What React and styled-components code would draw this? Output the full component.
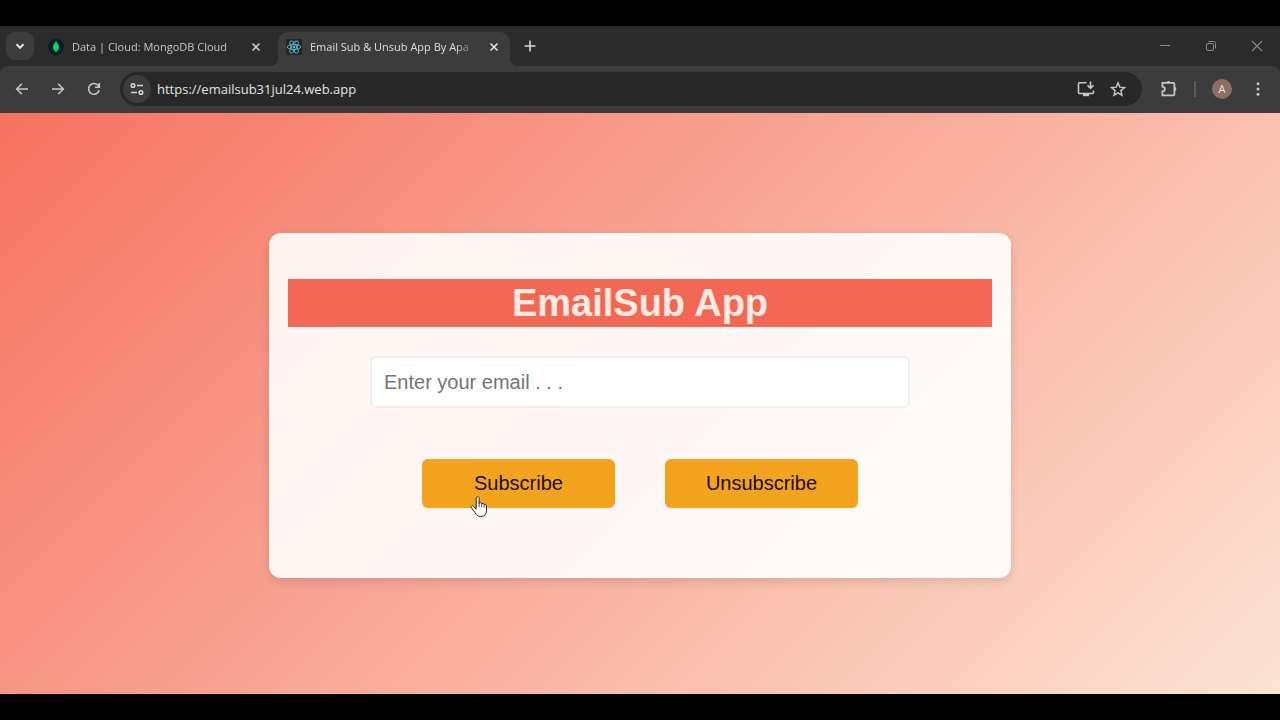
import React, { useState } from "react";
import styled, { createGlobalStyle } from "styled-components";

const GlobalStyle = createGlobalStyle`
  * {
    box-sizing: border-box;
  }

  body {
    margin: 0;
    background: #000000;
    font-family: "Liberation Sans", Arial, sans-serif;
  }

  button,
  input {
    font-family: inherit;
  }
`;

const Screen = styled.div`
  display: flex;
  flex-direction: column;
  min-height: 100vh;
  padding: 26px 0;
`;

const Browser = styled.header`
  background: #2b2b2b;
  font-family: "Open Sans", "Noto Sans", sans-serif;
`;

const TabStrip = styled.div`
  display: flex;
  height: 40px;
  padding: 6px 0 0 6px;
`;

const IconButton = styled.button`
  display: flex;
  align-items: center;
  justify-content: center;
  flex: none;
  width: ${(p) => p.$width || 36}px;
  height: ${(p) => p.$height || 34}px;
  padding: 0;
  border: 0;
  border-radius: ${(p) => p.$radius || 0}px;
  background: ${(p) => p.$background || "transparent"};
  color: ${(p) => p.$color || "#c7c7c7"};
  cursor: pointer;
`;

const Tabs = styled.div`
  display: flex;
  gap: 6px;
  margin: 0 6px;
`;

const Tab = styled.div`
  position: relative;
  display: flex;
  align-items: center;
  gap: 8px;
  width: 232px;
  height: 34px;
  padding: 0 8px 4px;
  border-radius: 10px 10px 0 0;
  background: ${(p) => (p.$active ? "#3c3c3c" : "transparent")};

  &::before,
  &::after {
    content: "";
    display: ${(p) => (p.$active ? "block" : "none")};
    position: absolute;
    bottom: 0;
    width: 8px;
    height: 8px;
  }

  &::before {
    right: 100%;
    background: radial-gradient(circle at 0 0, transparent 8px, #3c3c3c 8px);
  }

  &::after {
    left: 100%;
    background: radial-gradient(circle at 100% 0, transparent 8px, #3c3c3c 8px);
  }
`;

const TabTitle = styled.button`
  flex: 1;
  min-width: 0;
  overflow: hidden;
  padding: 0;
  border: 0;
  background: transparent;
  color: ${(p) => (p.$active ? "#dedede" : "#c4c4c4")};
  font-size: 11px;
  line-height: 18px;
  text-align: left;
  white-space: nowrap;
  mask-image: linear-gradient(to left, transparent, #000000 ${(p) => (p.$active ? 24 : 4)}px);
`;

const WindowControls = styled.div`
  display: flex;
  margin: -6px 0 0 auto;
`;

const Toolbar = styled.div`
  display: flex;
  align-items: center;
  height: 47px;
  padding: 0 4px 2px;
  border-radius: 8px 8px 0 0;
  background: #3c3c3c;
`;

const AddressBar = styled.div`
  display: flex;
  align-items: center;
  flex: 1;
  height: 34px;
  margin: 0 9px 0 8px;
  padding: 0 8px 0 3px;
  border-radius: 17px;
  background: #282828;
`;

const AddressInput = styled.input`
  flex: 1;
  min-width: 0;
  padding: 0 6px;
  border: 0;
  outline: 0;
  background: transparent;
  color: #e3e3e3;
  font-size: 13px;
  line-height: 20px;
`;

const Divider = styled.span`
  width: 2px;
  height: 16px;
  margin: 0 8px 0 7px;
  background: #5c5c5c;
`;

const Avatar = styled.span`
  width: 20px;
  border-radius: 50%;
  background: #8d6e63;
  color: #f3e9e6;
  font-size: 11px;
  line-height: 20px;
  text-align: center;
`;

const Page = styled.main`
  display: flex;
  flex: 1;
  flex-direction: column;
  align-items: center;
  padding: 120px 16px 60px;
  background: linear-gradient(135deg, #f67260, #fce4d4);
`;

const Card = styled.section`
  display: flex;
  flex-direction: column;
  align-items: center;
  width: 58vw;
  min-width: 600px;
  padding: 46px 19px 70px;
  border-radius: 12px;
  background: rgba(255, 255, 255, 0.9);
  box-shadow: 0 4px 10px rgba(0, 0, 0, 0.12);
`;

const Title = styled.h1`
  align-self: stretch;
  margin: 0 0 29px;
  background: #f26855;
  color: #ffe9e0;
  font-size: 38px;
  line-height: 48px;
  text-align: center;
`;

const EmailInput = styled.input`
  width: 540px;
  height: 52px;
  padding: 0 12px;
  border: 2px solid #f0eeee;
  border-radius: 6px;
  outline: 0;
  background: #ffffff;
  color: #000000;
  font-size: 20px;

  &::placeholder {
    color: #757575;
  }
`;

const Actions = styled.div`
  display: flex;
  gap: 50px;
  margin-top: 51px;
`;

const ActionButton = styled.button`
  position: relative;
  width: 193px;
  height: 49px;
  padding: 0;
  border: 0;
  border-radius: 6px;
  background: #f4a31f;
  color: #1a0d05;
  font-size: 20px;
  cursor: pointer;
`;

const Pointer = styled.svg`
  position: absolute;
  top: 36px;
  left: 48px;
  pointer-events: none;
`;

const Icon = ({ size = 16, stroke = 2, children }) => (
  <svg
    width={size}
    height={size}
    viewBox={`0 0 ${size} ${size}`}
    fill="none"
    stroke="currentColor"
    strokeWidth={stroke}
    aria-hidden="true"
  >
    {children}
  </svg>
);

const MongoIcon = () => (
  <svg width="16" height="16" viewBox="0 0 16 16" aria-hidden="true">
    <circle cx="8" cy="8" r="8" fill="#021e2b" />
    <path d="M8 2.5C10 4.7 10.8 6.3 10.8 8.2 10.8 10.2 9.7 11.6 8.4 12.4L8 14l-.4-1.6C6.3 11.6 5.2 10.2 5.2 8.2 5.2 6.3 6 4.7 8 2.5z" fill="#00ed64" />
    <path d="M8 4.2v9.6" stroke="#00a35c" strokeWidth=".8" />
  </svg>
);

const ReactIcon = () => (
  <svg width="16" height="16" viewBox="0 0 16 16" aria-hidden="true">
    <rect width="16" height="16" rx="1" fill="#20262b" />
    <g fill="none" stroke="#58b4c9" strokeWidth=".9">
      <ellipse cx="8" cy="8" rx="6.8" ry="2.6" />
      <ellipse cx="8" cy="8" rx="6.8" ry="2.6" transform="rotate(60 8 8)" />
      <ellipse cx="8" cy="8" rx="6.8" ry="2.6" transform="rotate(120 8 8)" />
    </g>
    <circle cx="8" cy="8" r="1.4" fill="#58b4c9" />
  </svg>
);

const CloseIcon = () => (
  <Icon stroke={1.6}>
    <path d="M4.5 4.5l7 7M11.5 4.5l-7 7" />
  </Icon>
);

const HandPointer = () => (
  <Pointer width="18" height="24" viewBox="0 0 18 24" aria-hidden="true">
    <path
      d="M6.2 14.2V3.2C6.2 1.2 9.1 1.2 9.1 3.2V8.6C9.3 7.2 11.6 7.4 11.6 9 12 7.9 14.1 8.2 14.1 9.8 14.6 8.9 16.5 9.2 16.5 10.9V15.5C16.5 19 14.6 21.5 11 21.5 7.7 21.5 6.5 20.2 4.8 17.4L1.2 12.6C.4 11.2 2.3 10.2 3.4 11.2z"
      fill="#ffffff"
      stroke="#222222"
      strokeLinejoin="round"
    />
    <path d="M9.1 8.6v3.6M11.6 9v3.4M14.1 9.8v2.8" stroke="#222222" strokeWidth=".8" />
  </Pointer>
);

const tabs = [
  { title: "Data | Cloud: MongoDB Cloud", icon: <MongoIcon /> },
  { title: "Email Sub & Unsub App By Apa", icon: <ReactIcon />, active: true },
];

const BrowserBar = () => (
  <Browser>
    <TabStrip>
      <IconButton $width={28} $height={28} $radius={9} $background="#3c3c3c" $color="#e3e3e3" aria-label="Search tabs">
        <Icon>
          <path d="M4.5 6.3L8 9.8l3.5-3.5" />
        </Icon>
      </IconButton>
      <Tabs>
        {tabs.map(({ title, icon, active }) => (
          <Tab key={title} $active={active}>
            {icon}
            <TabTitle $active={active}>{title}</TabTitle>
            <IconButton $width={16} $height={16} $color={active ? "#e3e3e3" : "#c7c7c7"} aria-label="Close tab">
              <CloseIcon />
            </IconButton>
          </Tab>
        ))}
      </Tabs>
      <IconButton $width={28} $height={28} $color="#d5d5d5" aria-label="New tab">
        <Icon stroke={1.6}>
          <path d="M8 2.5v11M2.5 8h11" />
        </Icon>
      </IconButton>
      <WindowControls>
        <IconButton $width={46} $height={40} $color="#8a8a8a" aria-label="Minimize">
          <Icon stroke={1}>
            <path d="M3 7.5h10" />
          </Icon>
        </IconButton>
        <IconButton $width={46} $height={40} $color="#8a8a8a" aria-label="Restore">
          <Icon stroke={1}>
            <rect x="3.5" y="5.5" width="7" height="7" rx="1.5" />
            <path d="M5.5 3.5h5a2 2 0 0 1 2 2v5" />
          </Icon>
        </IconButton>
        <IconButton $width={46} $height={40} $color="#8a8a8a" aria-label="Close">
          <Icon stroke={1.1}>
            <path d="M3 3l10 10M13 3L3 13" />
          </Icon>
        </IconButton>
      </WindowControls>
    </TabStrip>

    <Toolbar>
      <IconButton aria-label="Back">
        <Icon stroke={1.6}>
          <path d="M14 8H3M8 2.7L2.7 8 8 13.3" />
        </Icon>
      </IconButton>
      <IconButton aria-label="Forward">
        <Icon stroke={1.6}>
          <path d="M2 8h11M8 2.7L13.3 8 8 13.3" />
        </Icon>
      </IconButton>
      <IconButton aria-label="Reload">
        <Icon stroke={1.6}>
          <path d="M13.2 9.2A5.4 5.4 0 1 1 12.3 4.6L13.2 6M13.3 2v4.2H9" />
        </Icon>
      </IconButton>

      <AddressBar>
        <IconButton $width={28} $height={28} $radius={14} $background="#3c3c3c" $color="#d5d5d5" aria-label="View site information">
          <Icon stroke={1.5}>
            <circle cx="4" cy="4.5" r="1.8" />
            <path d="M8 4.5h6M2 11.5h6" />
            <circle cx="12" cy="11.5" r="1.8" />
          </Icon>
        </IconButton>
        <AddressInput type="text" aria-label="Address" defaultValue="https://emailsub31jul24.web.app" />
        <IconButton $width={32} aria-label="Install app">
          <Icon size={18} stroke={1.6}>
            <path d="M9.5 2.8h-7a1 1 0 0 0-1 1v8.7a1 1 0 0 0 1 1h13a1 1 0 0 0 1-1v-2M13.5 1.5v6.3M10.5 5.3l3 3 3-3" />
            <path d="M6 15h6" stroke="currentColor" strokeWidth="2.4" />
          </Icon>
        </IconButton>
        <IconButton $width={32} aria-label="Bookmark this page">
          <Icon size={16} stroke={1.4}>
            <path d="M8 1.8l1.8 4.3 4.7.4-3.6 3.1 1.1 4.6L8 11.8l-4 2.4 1.1-4.6-3.6-3.1 4.7-.4z" />
          </Icon>
        </IconButton>
      </AddressBar>

      <IconButton aria-label="Extensions">
        <Icon size={18} stroke={1.8}>
          <path d="M2.4 2.9h11a1 1 0 0 1 1 1v10.4a1 1 0 0 1-1 1h-11v-3.8a2.4 2.4 0 0 0 0-4.8z" />
          <path d="M6.4 2.9a2 2 0 0 1 4 0zM14.4 7.1a2 2 0 0 1 0 4z" fill="currentColor" stroke="none" />
        </Icon>
      </IconButton>
      <Divider />
      <IconButton aria-label="Profile">
        <Avatar>A</Avatar>
      </IconButton>
      <IconButton aria-label="Menu">
        <svg width="16" height="16" viewBox="0 0 16 16" fill="currentColor" aria-hidden="true">
          <circle cx="8" cy="2.7" r="1.5" />
          <circle cx="8" cy="8" r="1.5" />
          <circle cx="8" cy="13.3" r="1.5" />
        </svg>
      </IconButton>
    </Toolbar>
  </Browser>
);

export default function App() {
  const [email, setEmail] = useState("");

  return (
    <>
      <GlobalStyle />
      <Screen>
        <BrowserBar />
        <Page>
          <Card>
            <Title>EmailSub App</Title>
            <EmailInput
              type="email"
              aria-label="Email"
              placeholder="Enter your email . . ."
              value={email}
              onChange={(e) => setEmail(e.target.value)}
            />
            <Actions>
              <ActionButton>
                Subscribe
                <HandPointer />
              </ActionButton>
              <ActionButton>Unsubscribe</ActionButton>
            </Actions>
          </Card>
        </Page>
      </Screen>
    </>
  );
}
